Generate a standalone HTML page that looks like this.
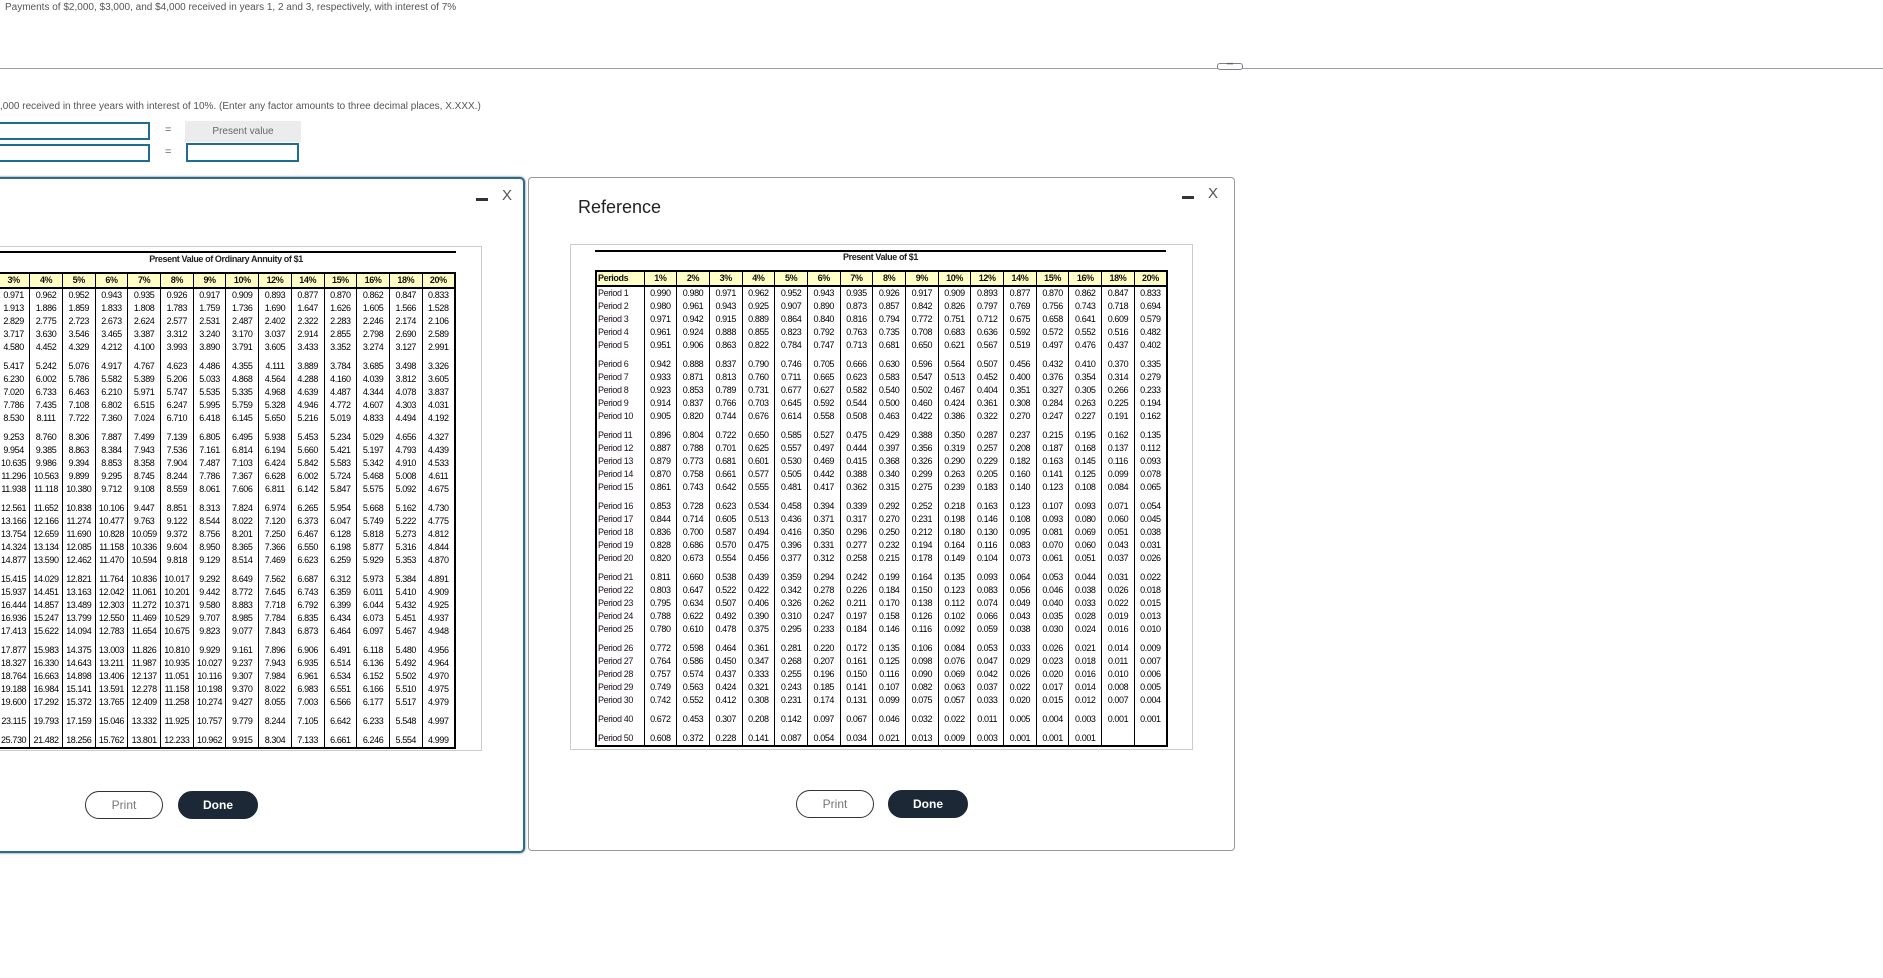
<!DOCTYPE html>
<html><head><meta charset="utf-8"><style>
*{box-sizing:border-box;margin:0;padding:0}
body{width:1883px;height:978px;background:#fff;position:relative;overflow:hidden;font-family:"Liberation Sans",sans-serif;color:#333}
.abs{position:absolute}
.t{font-size:10px;color:#555;white-space:nowrap}
.inp{position:absolute;border:2px solid #1d6f92;background:#fff}
.dlg{position:absolute;background:#fff}
.box{position:absolute;border:1px solid #ccc;background:#fff}
.btn{position:absolute;border-radius:15px;font-size:12px;text-align:center;line-height:26px}
.print{border:1px solid #333;color:#777;background:#fff}
.done{background:#1c2836;color:#fff;font-weight:bold;border:1px solid #1c2836}
table{border-collapse:collapse;table-layout:fixed;position:absolute;border:2px solid #000;font-size:9px;letter-spacing:-0.4px;color:#000}
td{border-left:1.5px solid #000;border-right:1.5px solid #000;height:13px;padding:0;text-align:center;white-space:nowrap;overflow:hidden;line-height:13px}
tr.h td{background:#ffffc6;font-weight:bold;height:14px;border-bottom:2px solid #000;color:#111}
tr.g td{height:6px;line-height:6px}
td.p{text-align:left;padding-left:1px;color:#201020}
.cap{position:absolute;font-size:9px;font-weight:bold;letter-spacing:-0.4px;color:#222;text-align:center}
.line{position:absolute;height:2px;background:#000}
.mx{position:absolute;font-size:15px;color:#555}
.dash{position:absolute;width:12px;height:3px;background:#333}
</style></head><body>
<div class="abs t" style="left:5px;top:2px">Payments of $2,000, $3,000, and $4,000 received in years 1, 2 and 3, respectively, with interest of 7%</div>
<div class="abs" style="left:0;top:68px;width:1883px;height:1px;background:#9aa0a8"></div>
<div class="abs" style="left:1217px;top:63px;width:26px;height:7px;border:1.5px solid #7a808a;border-radius:3px;background:#fff;font-size:6px;line-height:3px;text-align:center;color:#555">•••</div>
<div class="abs t" style="left:0;top:101px">,000 received in three years with interest of 10%. (Enter any factor amounts to three decimal places, X.XXX.)</div>
<div class="inp" style="left:-4px;top:122px;width:154px;height:18px"></div>
<div class="abs" style="left:165px;top:124px;font-size:11px;color:#666">=</div>
<div class="abs" style="left:185px;top:121px;width:116px;height:21px;background:#ececec;font-size:10px;color:#666;text-align:center;line-height:21px">Present value</div>
<div class="inp" style="left:-4px;top:144px;width:154px;height:18px"></div>
<div class="abs" style="left:165px;top:146px;font-size:11px;color:#666">=</div>
<div class="inp" style="left:186px;top:143px;width:113px;height:19px"></div>

<!-- left dialog -->
<div class="dlg" style="left:-10px;top:177px;width:535px;height:676px;border:2px solid #2d6b87;border-radius:5px;box-shadow:0 0 2px #567"></div>
<div class="dash" style="left:476px;top:198px"></div>
<div class="mx" style="left:502px;top:187px">X</div>
<div class="box" style="left:-5px;top:246px;width:487px;height:505px"></div>
<div class="line" style="left:-4px;top:251px;width:460px"></div>
<div class="cap" style="left:-4px;top:254px;width:460px">Present Value of Ordinary Annuity of $1</div>
<table style="left:-4px;top:272px;width:460px">
<tr class="h"><td>3%</td><td>4%</td><td>5%</td><td>6%</td><td>7%</td><td>8%</td><td>9%</td><td>10%</td><td>12%</td><td>14%</td><td>15%</td><td>16%</td><td>18%</td><td>20%</td></tr>
<tr><td>0.971</td><td>0.962</td><td>0.952</td><td>0.943</td><td>0.935</td><td>0.926</td><td>0.917</td><td>0.909</td><td>0.893</td><td>0.877</td><td>0.870</td><td>0.862</td><td>0.847</td><td>0.833</td></tr>
<tr><td>1.913</td><td>1.886</td><td>1.859</td><td>1.833</td><td>1.808</td><td>1.783</td><td>1.759</td><td>1.736</td><td>1.690</td><td>1.647</td><td>1.626</td><td>1.605</td><td>1.566</td><td>1.528</td></tr>
<tr><td>2.829</td><td>2.775</td><td>2.723</td><td>2.673</td><td>2.624</td><td>2.577</td><td>2.531</td><td>2.487</td><td>2.402</td><td>2.322</td><td>2.283</td><td>2.246</td><td>2.174</td><td>2.106</td></tr>
<tr><td>3.717</td><td>3.630</td><td>3.546</td><td>3.465</td><td>3.387</td><td>3.312</td><td>3.240</td><td>3.170</td><td>3.037</td><td>2.914</td><td>2.855</td><td>2.798</td><td>2.690</td><td>2.589</td></tr>
<tr><td>4.580</td><td>4.452</td><td>4.329</td><td>4.212</td><td>4.100</td><td>3.993</td><td>3.890</td><td>3.791</td><td>3.605</td><td>3.433</td><td>3.352</td><td>3.274</td><td>3.127</td><td>2.991</td></tr>
<tr class="g"><td></td><td></td><td></td><td></td><td></td><td></td><td></td><td></td><td></td><td></td><td></td><td></td><td></td><td></td></tr>
<tr><td>5.417</td><td>5.242</td><td>5.076</td><td>4.917</td><td>4.767</td><td>4.623</td><td>4.486</td><td>4.355</td><td>4.111</td><td>3.889</td><td>3.784</td><td>3.685</td><td>3.498</td><td>3.326</td></tr>
<tr><td>6.230</td><td>6.002</td><td>5.786</td><td>5.582</td><td>5.389</td><td>5.206</td><td>5.033</td><td>4.868</td><td>4.564</td><td>4.288</td><td>4.160</td><td>4.039</td><td>3.812</td><td>3.605</td></tr>
<tr><td>7.020</td><td>6.733</td><td>6.463</td><td>6.210</td><td>5.971</td><td>5.747</td><td>5.535</td><td>5.335</td><td>4.968</td><td>4.639</td><td>4.487</td><td>4.344</td><td>4.078</td><td>3.837</td></tr>
<tr><td>7.786</td><td>7.435</td><td>7.108</td><td>6.802</td><td>6.515</td><td>6.247</td><td>5.995</td><td>5.759</td><td>5.328</td><td>4.946</td><td>4.772</td><td>4.607</td><td>4.303</td><td>4.031</td></tr>
<tr><td>8.530</td><td>8.111</td><td>7.722</td><td>7.360</td><td>7.024</td><td>6.710</td><td>6.418</td><td>6.145</td><td>5.650</td><td>5.216</td><td>5.019</td><td>4.833</td><td>4.494</td><td>4.192</td></tr>
<tr class="g"><td></td><td></td><td></td><td></td><td></td><td></td><td></td><td></td><td></td><td></td><td></td><td></td><td></td><td></td></tr>
<tr><td>9.253</td><td>8.760</td><td>8.306</td><td>7.887</td><td>7.499</td><td>7.139</td><td>6.805</td><td>6.495</td><td>5.938</td><td>5.453</td><td>5.234</td><td>5.029</td><td>4.656</td><td>4.327</td></tr>
<tr><td>9.954</td><td>9.385</td><td>8.863</td><td>8.384</td><td>7.943</td><td>7.536</td><td>7.161</td><td>6.814</td><td>6.194</td><td>5.660</td><td>5.421</td><td>5.197</td><td>4.793</td><td>4.439</td></tr>
<tr><td>10.635</td><td>9.986</td><td>9.394</td><td>8.853</td><td>8.358</td><td>7.904</td><td>7.487</td><td>7.103</td><td>6.424</td><td>5.842</td><td>5.583</td><td>5.342</td><td>4.910</td><td>4.533</td></tr>
<tr><td>11.296</td><td>10.563</td><td>9.899</td><td>9.295</td><td>8.745</td><td>8.244</td><td>7.786</td><td>7.367</td><td>6.628</td><td>6.002</td><td>5.724</td><td>5.468</td><td>5.008</td><td>4.611</td></tr>
<tr><td>11.938</td><td>11.118</td><td>10.380</td><td>9.712</td><td>9.108</td><td>8.559</td><td>8.061</td><td>7.606</td><td>6.811</td><td>6.142</td><td>5.847</td><td>5.575</td><td>5.092</td><td>4.675</td></tr>
<tr class="g"><td></td><td></td><td></td><td></td><td></td><td></td><td></td><td></td><td></td><td></td><td></td><td></td><td></td><td></td></tr>
<tr><td>12.561</td><td>11.652</td><td>10.838</td><td>10.106</td><td>9.447</td><td>8.851</td><td>8.313</td><td>7.824</td><td>6.974</td><td>6.265</td><td>5.954</td><td>5.668</td><td>5.162</td><td>4.730</td></tr>
<tr><td>13.166</td><td>12.166</td><td>11.274</td><td>10.477</td><td>9.763</td><td>9.122</td><td>8.544</td><td>8.022</td><td>7.120</td><td>6.373</td><td>6.047</td><td>5.749</td><td>5.222</td><td>4.775</td></tr>
<tr><td>13.754</td><td>12.659</td><td>11.690</td><td>10.828</td><td>10.059</td><td>9.372</td><td>8.756</td><td>8.201</td><td>7.250</td><td>6.467</td><td>6.128</td><td>5.818</td><td>5.273</td><td>4.812</td></tr>
<tr><td>14.324</td><td>13.134</td><td>12.085</td><td>11.158</td><td>10.336</td><td>9.604</td><td>8.950</td><td>8.365</td><td>7.366</td><td>6.550</td><td>6.198</td><td>5.877</td><td>5.316</td><td>4.844</td></tr>
<tr><td>14.877</td><td>13.590</td><td>12.462</td><td>11.470</td><td>10.594</td><td>9.818</td><td>9.129</td><td>8.514</td><td>7.469</td><td>6.623</td><td>6.259</td><td>5.929</td><td>5.353</td><td>4.870</td></tr>
<tr class="g"><td></td><td></td><td></td><td></td><td></td><td></td><td></td><td></td><td></td><td></td><td></td><td></td><td></td><td></td></tr>
<tr><td>15.415</td><td>14.029</td><td>12.821</td><td>11.764</td><td>10.836</td><td>10.017</td><td>9.292</td><td>8.649</td><td>7.562</td><td>6.687</td><td>6.312</td><td>5.973</td><td>5.384</td><td>4.891</td></tr>
<tr><td>15.937</td><td>14.451</td><td>13.163</td><td>12.042</td><td>11.061</td><td>10.201</td><td>9.442</td><td>8.772</td><td>7.645</td><td>6.743</td><td>6.359</td><td>6.011</td><td>5.410</td><td>4.909</td></tr>
<tr><td>16.444</td><td>14.857</td><td>13.489</td><td>12.303</td><td>11.272</td><td>10.371</td><td>9.580</td><td>8.883</td><td>7.718</td><td>6.792</td><td>6.399</td><td>6.044</td><td>5.432</td><td>4.925</td></tr>
<tr><td>16.936</td><td>15.247</td><td>13.799</td><td>12.550</td><td>11.469</td><td>10.529</td><td>9.707</td><td>8.985</td><td>7.784</td><td>6.835</td><td>6.434</td><td>6.073</td><td>5.451</td><td>4.937</td></tr>
<tr><td>17.413</td><td>15.622</td><td>14.094</td><td>12.783</td><td>11.654</td><td>10.675</td><td>9.823</td><td>9.077</td><td>7.843</td><td>6.873</td><td>6.464</td><td>6.097</td><td>5.467</td><td>4.948</td></tr>
<tr class="g"><td></td><td></td><td></td><td></td><td></td><td></td><td></td><td></td><td></td><td></td><td></td><td></td><td></td><td></td></tr>
<tr><td>17.877</td><td>15.983</td><td>14.375</td><td>13.003</td><td>11.826</td><td>10.810</td><td>9.929</td><td>9.161</td><td>7.896</td><td>6.906</td><td>6.491</td><td>6.118</td><td>5.480</td><td>4.956</td></tr>
<tr><td>18.327</td><td>16.330</td><td>14.643</td><td>13.211</td><td>11.987</td><td>10.935</td><td>10.027</td><td>9.237</td><td>7.943</td><td>6.935</td><td>6.514</td><td>6.136</td><td>5.492</td><td>4.964</td></tr>
<tr><td>18.764</td><td>16.663</td><td>14.898</td><td>13.406</td><td>12.137</td><td>11.051</td><td>10.116</td><td>9.307</td><td>7.984</td><td>6.961</td><td>6.534</td><td>6.152</td><td>5.502</td><td>4.970</td></tr>
<tr><td>19.188</td><td>16.984</td><td>15.141</td><td>13.591</td><td>12.278</td><td>11.158</td><td>10.198</td><td>9.370</td><td>8.022</td><td>6.983</td><td>6.551</td><td>6.166</td><td>5.510</td><td>4.975</td></tr>
<tr><td>19.600</td><td>17.292</td><td>15.372</td><td>13.765</td><td>12.409</td><td>11.258</td><td>10.274</td><td>9.427</td><td>8.055</td><td>7.003</td><td>6.566</td><td>6.177</td><td>5.517</td><td>4.979</td></tr>
<tr class="g"><td></td><td></td><td></td><td></td><td></td><td></td><td></td><td></td><td></td><td></td><td></td><td></td><td></td><td></td></tr>
<tr><td>23.115</td><td>19.793</td><td>17.159</td><td>15.046</td><td>13.332</td><td>11.925</td><td>10.757</td><td>9.779</td><td>8.244</td><td>7.105</td><td>6.642</td><td>6.233</td><td>5.548</td><td>4.997</td></tr>
<tr class="g"><td></td><td></td><td></td><td></td><td></td><td></td><td></td><td></td><td></td><td></td><td></td><td></td><td></td><td></td></tr>
<tr><td>25.730</td><td>21.482</td><td>18.256</td><td>15.762</td><td>13.801</td><td>12.233</td><td>10.962</td><td>9.915</td><td>8.304</td><td>7.133</td><td>6.661</td><td>6.246</td><td>5.554</td><td>4.999</td></tr>
</table>
<div class="btn print" style="left:85px;top:791px;width:78px;height:28px">Print</div>
<div class="btn done" style="left:178px;top:791px;width:80px;height:28px">Done</div>

<!-- right dialog -->
<div class="dlg" style="left:528px;top:177px;width:707px;height:674px;border:1px solid #999;border-radius:4px"></div>
<div class="abs" style="left:578px;top:197px;font-size:18px;color:#222">Reference</div>
<div class="dash" style="left:1182px;top:196px"></div>
<div class="mx" style="left:1208px;top:185px">X</div>
<div class="box" style="left:570px;top:244px;width:623px;height:506px"></div>
<div class="line" style="left:595px;top:250px;width:571px"></div>
<div class="cap" style="left:595px;top:252px;width:571px">Present Value of $1</div>
<table style="left:595px;top:270px;width:571px">
<col style="width:48px"><col span="16" style="width:32.7px">
<tr class="h"><td class="p">Periods</td><td>1%</td><td>2%</td><td>3%</td><td>4%</td><td>5%</td><td>6%</td><td>7%</td><td>8%</td><td>9%</td><td>10%</td><td>12%</td><td>14%</td><td>15%</td><td>16%</td><td>18%</td><td>20%</td></tr>
<tr><td class="p">Period 1</td><td>0.990</td><td>0.980</td><td>0.971</td><td>0.962</td><td>0.952</td><td>0.943</td><td>0.935</td><td>0.926</td><td>0.917</td><td>0.909</td><td>0.893</td><td>0.877</td><td>0.870</td><td>0.862</td><td>0.847</td><td>0.833</td></tr>
<tr><td class="p">Period 2</td><td>0.980</td><td>0.961</td><td>0.943</td><td>0.925</td><td>0.907</td><td>0.890</td><td>0.873</td><td>0.857</td><td>0.842</td><td>0.826</td><td>0.797</td><td>0.769</td><td>0.756</td><td>0.743</td><td>0.718</td><td>0.694</td></tr>
<tr><td class="p">Period 3</td><td>0.971</td><td>0.942</td><td>0.915</td><td>0.889</td><td>0.864</td><td>0.840</td><td>0.816</td><td>0.794</td><td>0.772</td><td>0.751</td><td>0.712</td><td>0.675</td><td>0.658</td><td>0.641</td><td>0.609</td><td>0.579</td></tr>
<tr><td class="p">Period 4</td><td>0.961</td><td>0.924</td><td>0.888</td><td>0.855</td><td>0.823</td><td>0.792</td><td>0.763</td><td>0.735</td><td>0.708</td><td>0.683</td><td>0.636</td><td>0.592</td><td>0.572</td><td>0.552</td><td>0.516</td><td>0.482</td></tr>
<tr><td class="p">Period 5</td><td>0.951</td><td>0.906</td><td>0.863</td><td>0.822</td><td>0.784</td><td>0.747</td><td>0.713</td><td>0.681</td><td>0.650</td><td>0.621</td><td>0.567</td><td>0.519</td><td>0.497</td><td>0.476</td><td>0.437</td><td>0.402</td></tr>
<tr class="g"><td></td><td></td><td></td><td></td><td></td><td></td><td></td><td></td><td></td><td></td><td></td><td></td><td></td><td></td><td></td><td></td><td></td></tr>
<tr><td class="p">Period 6</td><td>0.942</td><td>0.888</td><td>0.837</td><td>0.790</td><td>0.746</td><td>0.705</td><td>0.666</td><td>0.630</td><td>0.596</td><td>0.564</td><td>0.507</td><td>0.456</td><td>0.432</td><td>0.410</td><td>0.370</td><td>0.335</td></tr>
<tr><td class="p">Period 7</td><td>0.933</td><td>0.871</td><td>0.813</td><td>0.760</td><td>0.711</td><td>0.665</td><td>0.623</td><td>0.583</td><td>0.547</td><td>0.513</td><td>0.452</td><td>0.400</td><td>0.376</td><td>0.354</td><td>0.314</td><td>0.279</td></tr>
<tr><td class="p">Period 8</td><td>0.923</td><td>0.853</td><td>0.789</td><td>0.731</td><td>0.677</td><td>0.627</td><td>0.582</td><td>0.540</td><td>0.502</td><td>0.467</td><td>0.404</td><td>0.351</td><td>0.327</td><td>0.305</td><td>0.266</td><td>0.233</td></tr>
<tr><td class="p">Period 9</td><td>0.914</td><td>0.837</td><td>0.766</td><td>0.703</td><td>0.645</td><td>0.592</td><td>0.544</td><td>0.500</td><td>0.460</td><td>0.424</td><td>0.361</td><td>0.308</td><td>0.284</td><td>0.263</td><td>0.225</td><td>0.194</td></tr>
<tr><td class="p">Period 10</td><td>0.905</td><td>0.820</td><td>0.744</td><td>0.676</td><td>0.614</td><td>0.558</td><td>0.508</td><td>0.463</td><td>0.422</td><td>0.386</td><td>0.322</td><td>0.270</td><td>0.247</td><td>0.227</td><td>0.191</td><td>0.162</td></tr>
<tr class="g"><td></td><td></td><td></td><td></td><td></td><td></td><td></td><td></td><td></td><td></td><td></td><td></td><td></td><td></td><td></td><td></td><td></td></tr>
<tr><td class="p">Period 11</td><td>0.896</td><td>0.804</td><td>0.722</td><td>0.650</td><td>0.585</td><td>0.527</td><td>0.475</td><td>0.429</td><td>0.388</td><td>0.350</td><td>0.287</td><td>0.237</td><td>0.215</td><td>0.195</td><td>0.162</td><td>0.135</td></tr>
<tr><td class="p">Period 12</td><td>0.887</td><td>0.788</td><td>0.701</td><td>0.625</td><td>0.557</td><td>0.497</td><td>0.444</td><td>0.397</td><td>0.356</td><td>0.319</td><td>0.257</td><td>0.208</td><td>0.187</td><td>0.168</td><td>0.137</td><td>0.112</td></tr>
<tr><td class="p">Period 13</td><td>0.879</td><td>0.773</td><td>0.681</td><td>0.601</td><td>0.530</td><td>0.469</td><td>0.415</td><td>0.368</td><td>0.326</td><td>0.290</td><td>0.229</td><td>0.182</td><td>0.163</td><td>0.145</td><td>0.116</td><td>0.093</td></tr>
<tr><td class="p">Period 14</td><td>0.870</td><td>0.758</td><td>0.661</td><td>0.577</td><td>0.505</td><td>0.442</td><td>0.388</td><td>0.340</td><td>0.299</td><td>0.263</td><td>0.205</td><td>0.160</td><td>0.141</td><td>0.125</td><td>0.099</td><td>0.078</td></tr>
<tr><td class="p">Period 15</td><td>0.861</td><td>0.743</td><td>0.642</td><td>0.555</td><td>0.481</td><td>0.417</td><td>0.362</td><td>0.315</td><td>0.275</td><td>0.239</td><td>0.183</td><td>0.140</td><td>0.123</td><td>0.108</td><td>0.084</td><td>0.065</td></tr>
<tr class="g"><td></td><td></td><td></td><td></td><td></td><td></td><td></td><td></td><td></td><td></td><td></td><td></td><td></td><td></td><td></td><td></td><td></td></tr>
<tr><td class="p">Period 16</td><td>0.853</td><td>0.728</td><td>0.623</td><td>0.534</td><td>0.458</td><td>0.394</td><td>0.339</td><td>0.292</td><td>0.252</td><td>0.218</td><td>0.163</td><td>0.123</td><td>0.107</td><td>0.093</td><td>0.071</td><td>0.054</td></tr>
<tr><td class="p">Period 17</td><td>0.844</td><td>0.714</td><td>0.605</td><td>0.513</td><td>0.436</td><td>0.371</td><td>0.317</td><td>0.270</td><td>0.231</td><td>0.198</td><td>0.146</td><td>0.108</td><td>0.093</td><td>0.080</td><td>0.060</td><td>0.045</td></tr>
<tr><td class="p">Period 18</td><td>0.836</td><td>0.700</td><td>0.587</td><td>0.494</td><td>0.416</td><td>0.350</td><td>0.296</td><td>0.250</td><td>0.212</td><td>0.180</td><td>0.130</td><td>0.095</td><td>0.081</td><td>0.069</td><td>0.051</td><td>0.038</td></tr>
<tr><td class="p">Period 19</td><td>0.828</td><td>0.686</td><td>0.570</td><td>0.475</td><td>0.396</td><td>0.331</td><td>0.277</td><td>0.232</td><td>0.194</td><td>0.164</td><td>0.116</td><td>0.083</td><td>0.070</td><td>0.060</td><td>0.043</td><td>0.031</td></tr>
<tr><td class="p">Period 20</td><td>0.820</td><td>0.673</td><td>0.554</td><td>0.456</td><td>0.377</td><td>0.312</td><td>0.258</td><td>0.215</td><td>0.178</td><td>0.149</td><td>0.104</td><td>0.073</td><td>0.061</td><td>0.051</td><td>0.037</td><td>0.026</td></tr>
<tr class="g"><td></td><td></td><td></td><td></td><td></td><td></td><td></td><td></td><td></td><td></td><td></td><td></td><td></td><td></td><td></td><td></td><td></td></tr>
<tr><td class="p">Period 21</td><td>0.811</td><td>0.660</td><td>0.538</td><td>0.439</td><td>0.359</td><td>0.294</td><td>0.242</td><td>0.199</td><td>0.164</td><td>0.135</td><td>0.093</td><td>0.064</td><td>0.053</td><td>0.044</td><td>0.031</td><td>0.022</td></tr>
<tr><td class="p">Period 22</td><td>0.803</td><td>0.647</td><td>0.522</td><td>0.422</td><td>0.342</td><td>0.278</td><td>0.226</td><td>0.184</td><td>0.150</td><td>0.123</td><td>0.083</td><td>0.056</td><td>0.046</td><td>0.038</td><td>0.026</td><td>0.018</td></tr>
<tr><td class="p">Period 23</td><td>0.795</td><td>0.634</td><td>0.507</td><td>0.406</td><td>0.326</td><td>0.262</td><td>0.211</td><td>0.170</td><td>0.138</td><td>0.112</td><td>0.074</td><td>0.049</td><td>0.040</td><td>0.033</td><td>0.022</td><td>0.015</td></tr>
<tr><td class="p">Period 24</td><td>0.788</td><td>0.622</td><td>0.492</td><td>0.390</td><td>0.310</td><td>0.247</td><td>0.197</td><td>0.158</td><td>0.126</td><td>0.102</td><td>0.066</td><td>0.043</td><td>0.035</td><td>0.028</td><td>0.019</td><td>0.013</td></tr>
<tr><td class="p">Period 25</td><td>0.780</td><td>0.610</td><td>0.478</td><td>0.375</td><td>0.295</td><td>0.233</td><td>0.184</td><td>0.146</td><td>0.116</td><td>0.092</td><td>0.059</td><td>0.038</td><td>0.030</td><td>0.024</td><td>0.016</td><td>0.010</td></tr>
<tr class="g"><td></td><td></td><td></td><td></td><td></td><td></td><td></td><td></td><td></td><td></td><td></td><td></td><td></td><td></td><td></td><td></td><td></td></tr>
<tr><td class="p">Period 26</td><td>0.772</td><td>0.598</td><td>0.464</td><td>0.361</td><td>0.281</td><td>0.220</td><td>0.172</td><td>0.135</td><td>0.106</td><td>0.084</td><td>0.053</td><td>0.033</td><td>0.026</td><td>0.021</td><td>0.014</td><td>0.009</td></tr>
<tr><td class="p">Period 27</td><td>0.764</td><td>0.586</td><td>0.450</td><td>0.347</td><td>0.268</td><td>0.207</td><td>0.161</td><td>0.125</td><td>0.098</td><td>0.076</td><td>0.047</td><td>0.029</td><td>0.023</td><td>0.018</td><td>0.011</td><td>0.007</td></tr>
<tr><td class="p">Period 28</td><td>0.757</td><td>0.574</td><td>0.437</td><td>0.333</td><td>0.255</td><td>0.196</td><td>0.150</td><td>0.116</td><td>0.090</td><td>0.069</td><td>0.042</td><td>0.026</td><td>0.020</td><td>0.016</td><td>0.010</td><td>0.006</td></tr>
<tr><td class="p">Period 29</td><td>0.749</td><td>0.563</td><td>0.424</td><td>0.321</td><td>0.243</td><td>0.185</td><td>0.141</td><td>0.107</td><td>0.082</td><td>0.063</td><td>0.037</td><td>0.022</td><td>0.017</td><td>0.014</td><td>0.008</td><td>0.005</td></tr>
<tr><td class="p">Period 30</td><td>0.742</td><td>0.552</td><td>0.412</td><td>0.308</td><td>0.231</td><td>0.174</td><td>0.131</td><td>0.099</td><td>0.075</td><td>0.057</td><td>0.033</td><td>0.020</td><td>0.015</td><td>0.012</td><td>0.007</td><td>0.004</td></tr>
<tr class="g"><td></td><td></td><td></td><td></td><td></td><td></td><td></td><td></td><td></td><td></td><td></td><td></td><td></td><td></td><td></td><td></td><td></td></tr>
<tr><td class="p">Period 40</td><td>0.672</td><td>0.453</td><td>0.307</td><td>0.208</td><td>0.142</td><td>0.097</td><td>0.067</td><td>0.046</td><td>0.032</td><td>0.022</td><td>0.011</td><td>0.005</td><td>0.004</td><td>0.003</td><td>0.001</td><td>0.001</td></tr>
<tr class="g"><td></td><td></td><td></td><td></td><td></td><td></td><td></td><td></td><td></td><td></td><td></td><td></td><td></td><td></td><td></td><td></td><td></td></tr>
<tr><td class="p">Period 50</td><td>0.608</td><td>0.372</td><td>0.228</td><td>0.141</td><td>0.087</td><td>0.054</td><td>0.034</td><td>0.021</td><td>0.013</td><td>0.009</td><td>0.003</td><td>0.001</td><td>0.001</td><td>0.001</td><td></td><td></td></tr>
</table>
<div class="btn print" style="left:796px;top:790px;width:78px;height:28px">Print</div>
<div class="btn done" style="left:888px;top:790px;width:80px;height:28px">Done</div>
</body></html>
